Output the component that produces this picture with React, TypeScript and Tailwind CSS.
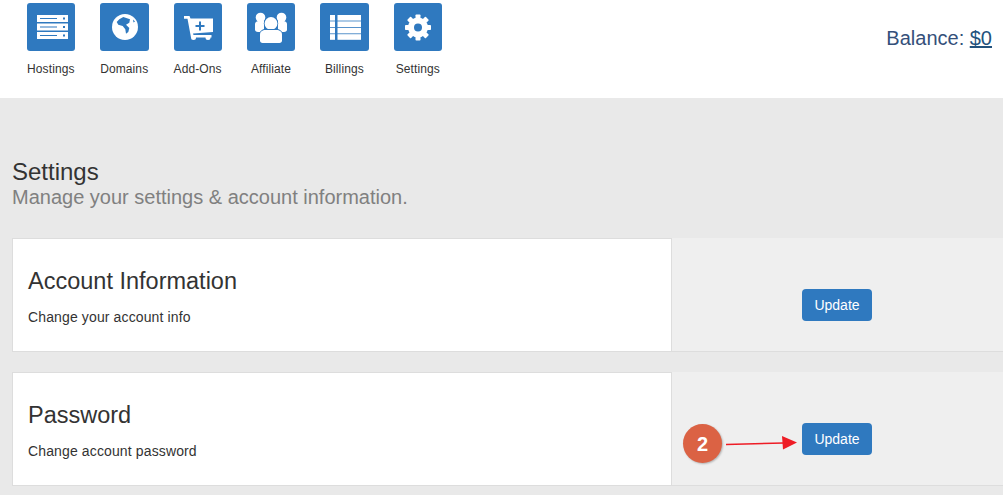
const font = "font-['Liberation_Sans',Arial,sans-serif]";
const blue = "#2f79bf";

function ServerIcon() {
  return (
    <svg className="ml-[3px]" width="31" height="24" viewBox="0 0 31 24">
      {[0, 8.5, 17].map((y) => (
        <g key={y}>
          <rect x="0" y={y} width="31" height="7" fill="white" />
          <rect x="3" y={y + 3} width="17" height="1" fill={blue} />
          <rect x="26" y={y + 2.5} width="2" height="2" fill={blue} />
        </g>
      ))}
    </svg>
  );
}

function GlobeIcon() {
  return (
    <svg className="ml-[1px]" width="26" height="26" viewBox="0 0 26 26">
      <circle cx="13" cy="13" r="13" fill="white" />
      <path
        d="M7.300 5.300 L11.300 3 L18 5.300 L17.300 8.700 L14 10.700 L17.300 14 L16.300 18 L14 19.700 L13.300 15.300 L10.700 12 L6.300 10.700 L4.700 8 Z"
        fill={blue}
      />
      <path d="M21 5.500 L23 7.500 L21.500 8.500 Z" fill={blue} />
    </svg>
  );
}

function CartIcon() {
  return (
    <svg className="ml-[1px]" width="29" height="25" viewBox="0 0 29 25" fill="white">
      <path d="M0 1h5.500l1 2.500H29v13.500l-20 1.500 .5 1.500h18v2.500H7L3.500 3.800H0z" />
      <circle cx="9.500" cy="22.500" r="2.500" />
      <circle cx="24" cy="22.500" r="2.500" />
      <path d="M15 6.500h2v3.500h3.500v2H17v3.500h-2V12h-3.500v-2H15z" fill={blue} />
    </svg>
  );
}

function UsersIcon() {
  return (
    <svg width="34" height="31" viewBox="0 0 34 31" fill="white">
      <circle cx="6.500" cy="5.500" r="4.800" />
      <circle cx="27.500" cy="5.500" r="4.800" />
      <path d="M1 12c0-2 2-3 4-3h5v11H4c-2 0-3-1-3-2.500z" />
      <path d="M33 12c0-2-2-3-4-3h-5v11h6c2 0 3-1 3-2.500z" />
      <circle cx="17" cy="11.500" r="7.200" fill={blue} />
      <circle cx="17" cy="11.500" r="6.400" />
      <path d="M5.500 22c0-3 3-5 6-5h11c3 0 6 2 6 5v6c0 2-1 3-3 3H8.500c-2 0-3-1-3-3z" fill={blue} />
      <path d="M6 22.500c0-3 2.500-4.500 5.500-4.500h11c3 0 5.500 1.500 5.500 4.500v6c0 1.500-1 2.500-2.500 2.500h-17C7 31 6 30 6 28.500z" />
    </svg>
  );
}

function ListIcon() {
  return (
    <svg className="ml-[2px]" width="31" height="25" viewBox="0 0 31 25" fill="white">
      {[0, 6.4, 12.8, 19.2].map((y) => (
        <g key={y}>
          <rect x="0" y={y} width="5" height="5.600" />
          <rect x="7.500" y={y} width="23.500" height="5.600" />
        </g>
      ))}
    </svg>
  );
}

function GearIcon() {
  return (
    <svg width="26" height="27" viewBox="0 0 26 27" fill="white">
      {[0, 45, 90, 135, 180, 225, 270, 315].map((a) => (
        <rect key={a} x="10.500" y="0.500" width="5" height="5" rx="0.800" transform={`rotate(${a} 13 13.500)`} />
      ))}
      <circle cx="13" cy="13.500" r="10" />
      <circle cx="13" cy="13.500" r="4" fill={blue} />
    </svg>
  );
}

const navItems = [
  { label: "Hostings", icon: <ServerIcon />, box: "w-[48px]" },
  { label: "Domains", icon: <GlobeIcon />, box: "w-[49px]" },
  { label: "Add-Ons", icon: <CartIcon />, box: "w-[48px]" },
  { label: "Affiliate", icon: <UsersIcon />, box: "w-[48px]" },
  { label: "Billings", icon: <ListIcon />, box: "w-[49px]" },
  { label: "Settings", icon: <GearIcon />, box: "w-[48px]" },
];

function NavItem({ label, icon, box }: { label: string; icon: React.ReactNode; box: string }) {
  return (
    <div className="flex w-[73.4px] flex-col items-center">
      <div className={`flex h-[48px] items-center justify-center rounded-[3px] bg-[#2f79bf] ${box}`}>{icon}</div>
      <div className="mt-[10px] text-[12px] leading-[17px] tracking-[0.1px] text-[#333333]">{label}</div>
    </div>
  );
}

function Row({ title, text, children }: { title: string; text: string; children?: React.ReactNode }) {
  return (
    <div className="flex h-[114px] pl-[12px]">
      <div className="w-[660px] border border-[#dddddd] bg-white pl-[15px] pt-[28px]">
        <h3 className="text-[23.5px] leading-[28px] text-[#333333]">{title}</h3>
        <p className="mt-[12px] text-[14px] leading-[20px] tracking-[0.13px] text-[#333333]">{text}</p>
      </div>
      <div className="relative flex-1 border-b border-[#dddddd] bg-[#efefef] pl-[130px] pt-[51px]">
        <button className="h-[32px] w-[70px] rounded-[4px] bg-[#2f79bf] text-[14px] text-white">Update</button>
        {children}
      </div>
    </div>
  );
}

export default function App() {
  return (
    <div className={`h-[495px] w-[1003px] overflow-hidden bg-[#e9e9e9] ${font}`}>
      <header className="flex h-[98px] items-start justify-between bg-white pl-[14.15px] pr-[11px] pt-[3px]">
        <nav className="flex">
          {navItems.map((item) => (
            <NavItem key={item.label} {...item} />
          ))}
        </nav>
        <div className="pt-[21px] text-[20px] leading-[28px] text-[#35507a]">
          Balance: <span className="text-[#23527c] underline">$0</span>
        </div>
      </header>
      <main className="pt-[60px]">
        <div className="pl-[12px]">
          <h1 className="text-[24px] leading-[28px] text-[#333333]">Settings</h1>
          <p className="-mt-[1px] text-[20px] leading-[24px] text-[#808080]">Manage your settings &amp; account information.</p>
        </div>
        <div className="mt-[29px] flex flex-col gap-[20px]">
          <Row title="Account Information" text="Change your account info" />
          <Row title="Password" text="Change account password">
            <div className="absolute left-[11px] top-[52px] flex h-[39px] w-[39px] items-center justify-center rounded-full bg-[#db6244] text-[20px] font-bold text-white shadow-[1px_1px_2px_rgba(0,0,0,0.25)]">
              2
            </div>
            <svg className="absolute left-[54px] top-[60px]" width="76" height="24" viewBox="0 0 76 24">
              <path d="M0 12.500 L58 11" stroke="#ee1c25" strokeWidth="1.500" fill="none" />
              <path d="M56 4 L71 10.500 L57 17.500 Z" fill="#ee1c25" />
            </svg>
          </Row>
        </div>
      </main>
    </div>
  );
}
